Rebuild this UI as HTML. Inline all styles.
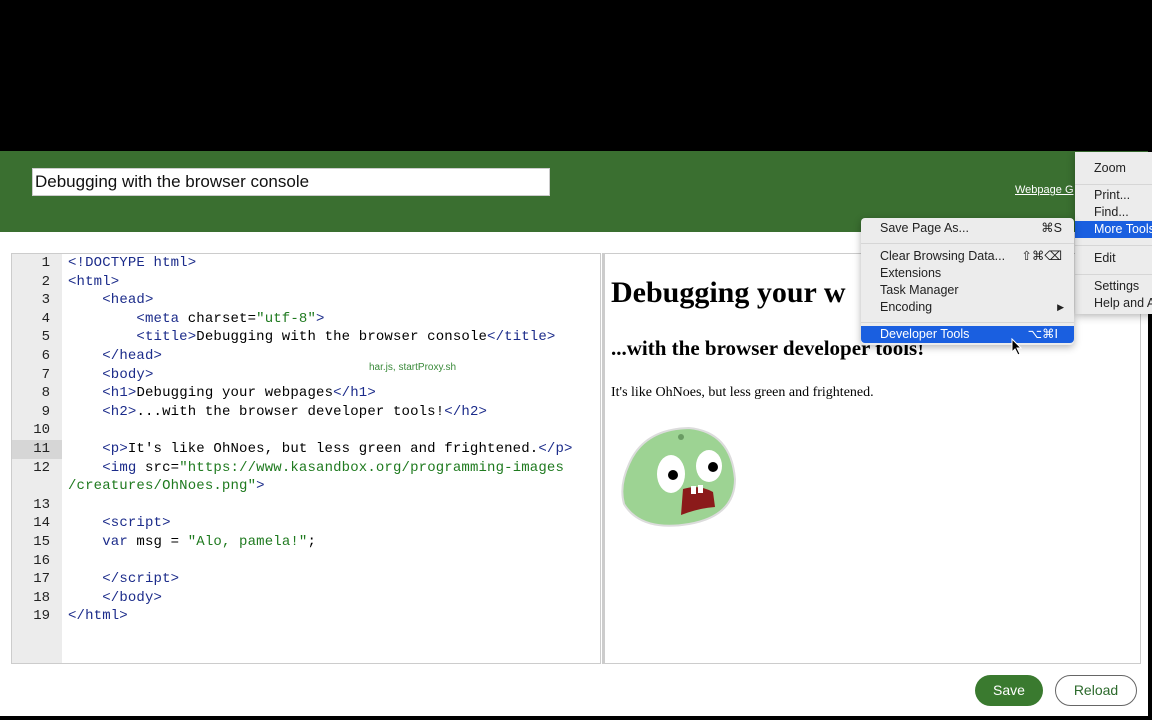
<!DOCTYPE html>
<html><head><style>
body{margin:0;width:1152px;height:720px;background:#000;position:relative;overflow:hidden;font-family:"Liberation Sans",sans-serif}
.main{position:absolute;left:0;top:151px;width:1148px;height:565px;background:#fff}
.hdr{position:absolute;left:0;top:151px;width:1148px;height:81px;background:#3a6f30}
.inp{position:absolute;left:32px;top:168px;width:514px;height:26px;background:#fff;border:1px solid #ccc;font-size:17px;line-height:26px;padding-left:2px;color:#111}
.ed{position:absolute;left:11px;top:253px;width:588px;height:409px;border:1px solid #ccc;background:#fff}
.gut{position:absolute;left:0;top:0;width:50px;height:409px;background:#ececec}
.code{position:absolute;left:0;top:0;font-family:"Liberation Mono",monospace;font-size:14px;letter-spacing:0.15px;line-height:18.6px;white-space:pre}
.ln{position:absolute;left:0;width:38px;text-align:right;color:#222;font-family:"Liberation Mono",monospace;font-size:14px;line-height:18.6px}
.t{color:#1b2b8a}.s{color:#1f7a1f}
.pv{position:absolute;left:602px;top:253px;width:535px;height:409px;border:1px solid #ccc;border-left:3px solid #ccc;background:#fff;font-family:"Liberation Serif",serif}
.menu{position:absolute;background:#ececec;border-radius:4px;box-shadow:0 2px 8px rgba(0,0,0,.3);font-size:12.5px;color:#222}
.mi{position:absolute;left:0;right:0;height:17px;line-height:17px;padding-left:19px}
.btn{position:absolute;top:675px;height:31px;border-radius:16px;font-size:14px;line-height:31px;text-align:center}
</style></head><body>
<div class="main"></div>
<div class="hdr"></div>
<div class="inp">Debugging with the browser console</div>
<div style="position:absolute;left:1015px;top:184px;color:#fff;font-size:11px;text-decoration:underline">Webpage G</div>
<div class="ed"><div class="gut"></div>
<div style="position:absolute;left:0;top:186px;width:50px;height:18.6px;background:#d6d6d6"></div>
<div style="position:absolute;left:0;top:0">
<div class="ln" style="top:0">1</div><div class="ln" style="top:18.6px">2</div><div class="ln" style="top:37.2px">3</div><div class="ln" style="top:55.8px">4</div><div class="ln" style="top:74.4px">5</div><div class="ln" style="top:93px">6</div><div class="ln" style="top:111.6px">7</div><div class="ln" style="top:130.2px">8</div><div class="ln" style="top:148.8px">9</div><div class="ln" style="top:167.4px">10</div><div class="ln" style="top:186px">11</div><div class="ln" style="top:204.6px">12</div><div class="ln" style="top:241.8px">13</div><div class="ln" style="top:260.4px">14</div><div class="ln" style="top:279px">15</div><div class="ln" style="top:297.6px">16</div><div class="ln" style="top:316.2px">17</div><div class="ln" style="top:334.8px">18</div><div class="ln" style="top:353.4px">19</div>
</div>
<div class="code" style="left:56px"><span class="t">&lt;!DOCTYPE html&gt;</span>
<span class="t">&lt;html&gt;</span>
    <span class="t">&lt;head&gt;</span>
        <span class="t">&lt;meta</span> charset=<span class="s">"utf-8"</span><span class="t">&gt;</span>
        <span class="t">&lt;title&gt;</span>Debugging with the browser console<span class="t">&lt;/title&gt;</span>
    <span class="t">&lt;/head&gt;</span>
    <span class="t">&lt;body&gt;</span>
    <span class="t">&lt;h1&gt;</span>Debugging your webpages<span class="t">&lt;/h1&gt;</span>
    <span class="t">&lt;h2&gt;</span>...with the browser developer tools!<span class="t">&lt;/h2&gt;</span>

    <span class="t">&lt;p&gt;</span>It's like OhNoes, but less green and frightened.<span class="t">&lt;/p&gt;</span>
    <span class="t">&lt;img</span> src=<span class="s">"https://www.kasandbox.org/programming-images</span>
<span class="s">/creatures/OhNoes.png"</span><span class="t">&gt;</span>

    <span class="t">&lt;script&gt;</span>
    <span class="t">var</span> msg = <span class="s">"Alo, pamela!"</span>;

    <span class="t">&lt;/script&gt;</span>
    <span class="t">&lt;/body&gt;</span>
<span class="t">&lt;/html&gt;</span></div>
<div style="position:absolute;left:357px;top:108px;font-size:10px;color:#3a8a3a">har.js, startProxy.sh</div>
</div>
<div class="pv">
<div style="position:absolute;left:6px;top:22px;font-size:30px;font-weight:bold">Debugging your w</div>
<div style="position:absolute;left:6px;top:82px;font-size:21px;font-weight:bold">...with the browser developer tools!</div>
<div style="position:absolute;left:6px;top:131px;font-size:14px">It's like OhNoes, but less green and frightened.</div>
<svg style="position:absolute;left:14px;top:170px" width="120" height="110"><path d="M10 40 Q25 5 70 4 Q112 8 116 55 Q116 92 70 100 Q22 108 5 80 Q0 62 10 40Z" fill="#9dd393" stroke="#dcdcdc" stroke-width="2"/><ellipse cx="52" cy="50" rx="14" ry="19" fill="#fff"/><ellipse cx="90" cy="42" rx="13" ry="16" fill="#fff"/><circle cx="54" cy="51" r="5" fill="#000"/><circle cx="94" cy="43" r="5" fill="#000"/><path d="M64 65 Q80 60 94 68 L96 83 Q80 84 62 91Z" fill="#8b1a1a"/><rect x="72" y="62" width="5" height="8" fill="#fff"/><rect x="79" y="61" width="5" height="8" fill="#fff"/><circle cx="62" cy="13" r="3" fill="#6a9c63"/></svg>
</div>
<div class="btn" style="left:975px;width:68px;background:#3a7a2f;color:#fff">Save</div>
<div class="btn" style="left:1055px;width:80px;border:1px solid #666;color:#2c6a2c;background:#fff;height:29px;line-height:29px">Reload</div>
<div class="menu" style="left:1075px;top:152px;width:90px;height:162px;border-radius:0">
<div class="mi" style="top:8px">Zoom</div>
<div style="position:absolute;left:0;right:0;top:32px;border-top:1px solid #d6d6d6"></div>
<div class="mi" style="top:35px">Print...</div>
<div class="mi" style="top:52px">Find...</div>
<div class="mi" style="top:69px;background:#1a5fe0;color:#fff">More Tools</div>
<div style="position:absolute;left:0;right:0;top:93px;border-top:1px solid #d6d6d6"></div>
<div class="mi" style="top:98px">Edit</div>
<div style="position:absolute;left:0;right:0;top:122px;border-top:1px solid #d6d6d6"></div>
<div class="mi" style="top:126px">Settings</div>
<div class="mi" style="top:143px">Help and A</div>
</div>
<div class="menu" style="left:861px;top:218px;width:213px;height:127px">
<div class="mi" style="top:2px">Save Page As...<span style="position:absolute;right:12px">⌘S</span></div>
<div style="position:absolute;left:0;right:0;top:25px;border-top:1px solid #d6d6d6"></div>
<div class="mi" style="top:30px">Clear Browsing Data...<span style="position:absolute;right:12px">⇧⌘⌫</span></div>
<div class="mi" style="top:47px">Extensions</div>
<div class="mi" style="top:64px">Task Manager</div>
<div class="mi" style="top:81px">Encoding<span style="position:absolute;right:10px;font-size:9px">▶</span></div>
<div style="position:absolute;left:0;right:0;top:104px;border-top:1px solid #d6d6d6"></div>
<div class="mi" style="top:108px;background:#1a5fe0;color:#fff;border-radius:0 0 4px 4px">Developer Tools<span style="position:absolute;right:16px">⌥⌘I</span></div>
</div>
<svg style="position:absolute;left:1011px;top:338px" width="12" height="18"><path d="M1 1 L1 14 L4 11 L7 17 L9 16 L6 10 L10 10Z" fill="#000" stroke="#fff" stroke-width="1"/></svg>
</body></html>
